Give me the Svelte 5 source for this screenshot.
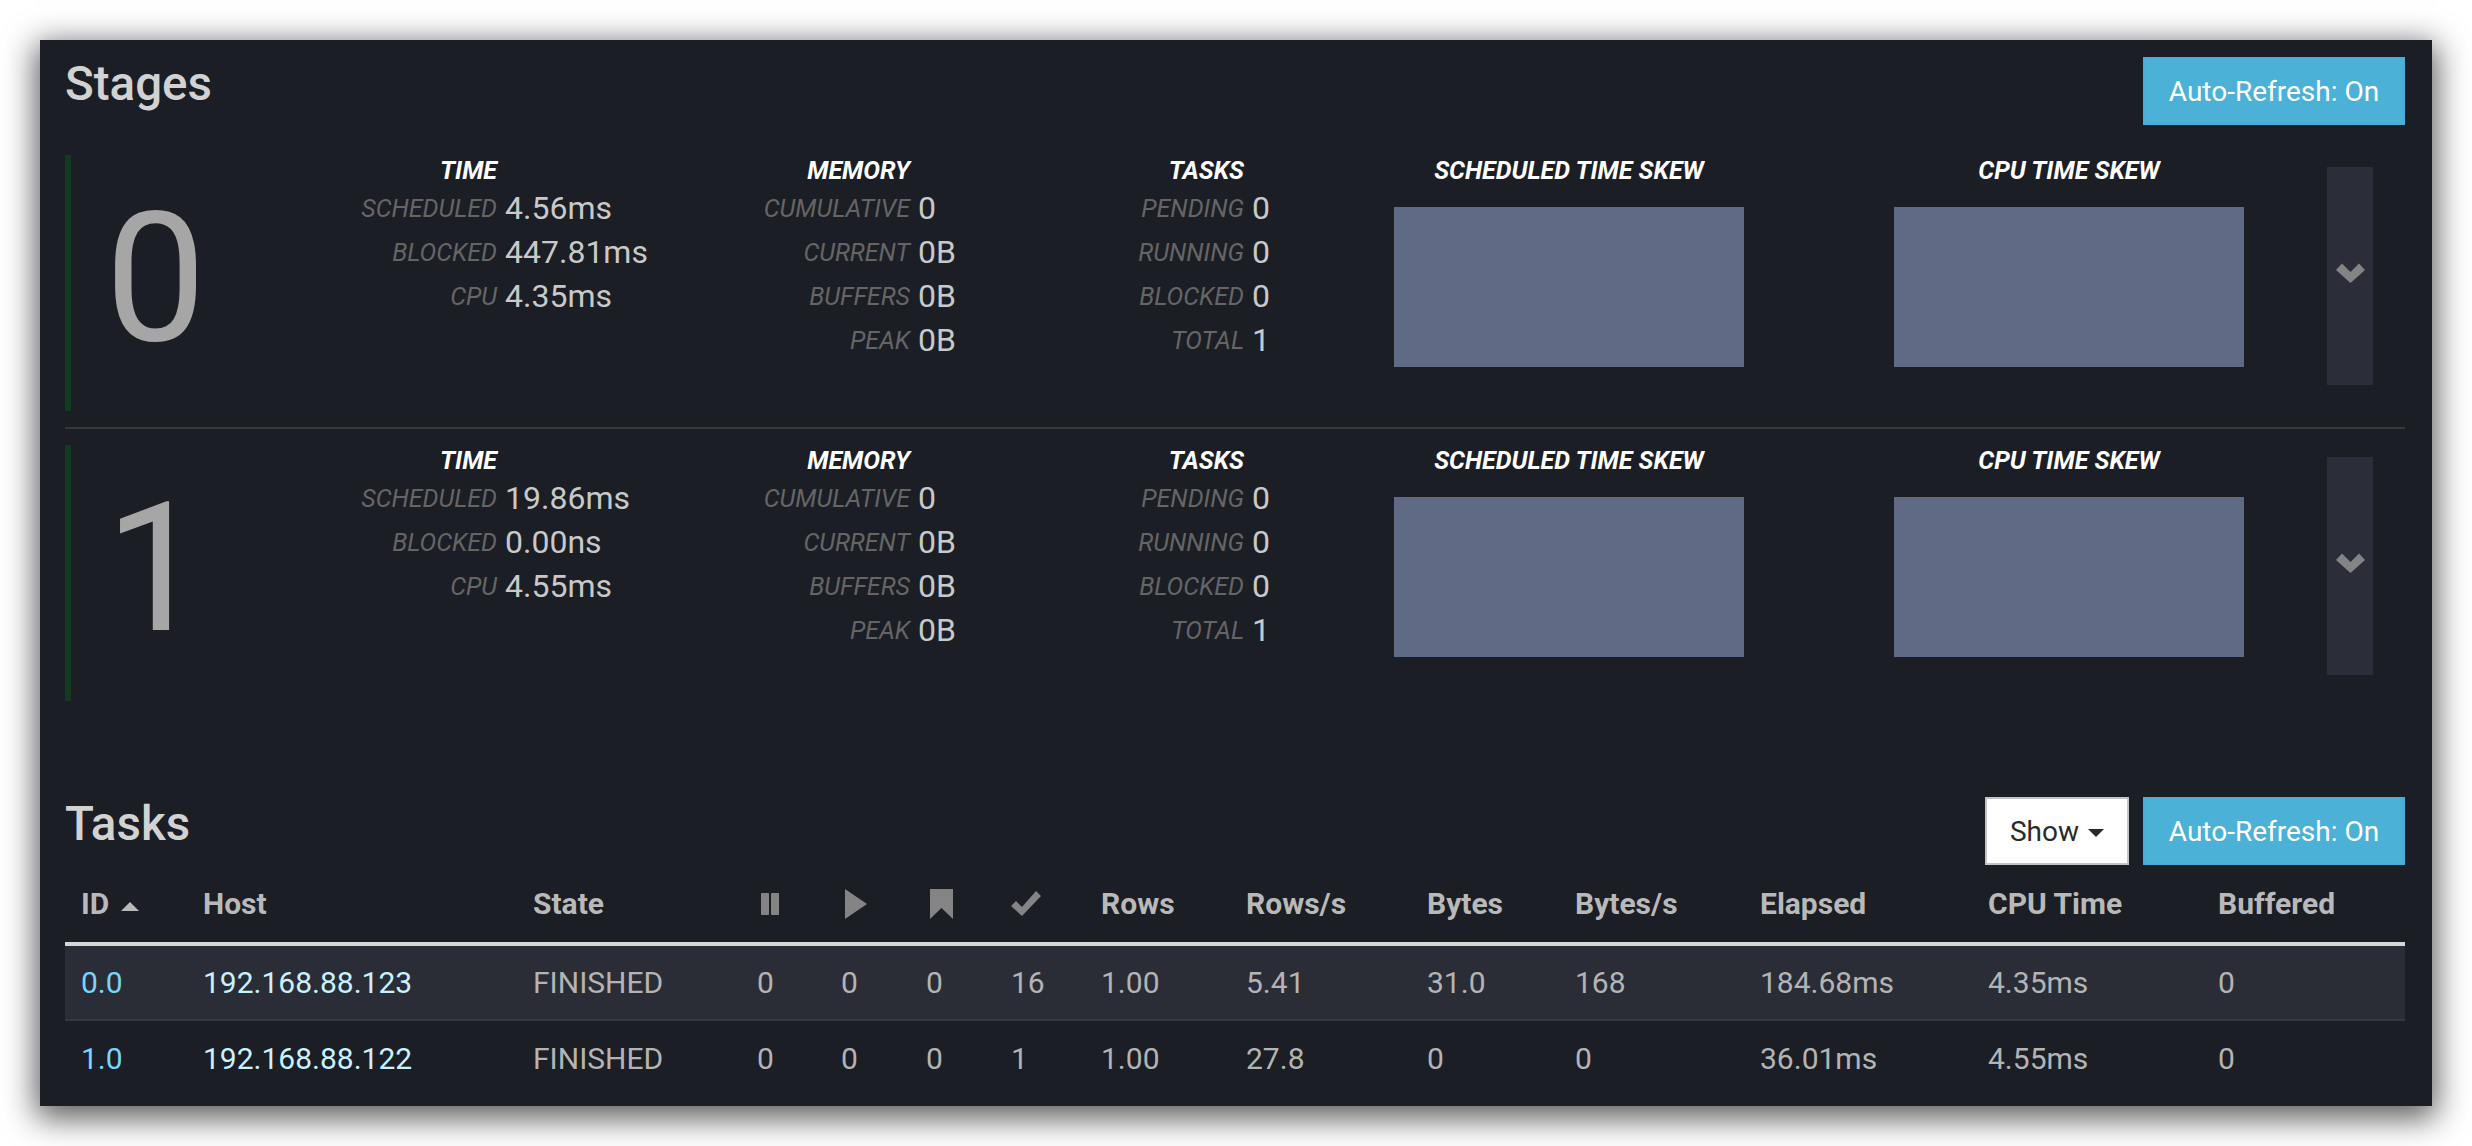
<script>
    const stages = [
        {
            id: 0,
            time: [["Scheduled", "4.56ms"], ["Blocked", "447.81ms"], ["CPU", "4.35ms"]],
            memory: [["Cumulative", "0"], ["Current", "0B"], ["Buffers", "0B"], ["Peak", "0B"]],
            tasks: [["Pending", "0"], ["Running", "0"], ["Blocked", "0"], ["Total", "1"]]
        },
        {
            id: 1,
            time: [["Scheduled", "19.86ms"], ["Blocked", "0.00ns"], ["CPU", "4.55ms"]],
            memory: [["Cumulative", "0"], ["Current", "0B"], ["Buffers", "0B"], ["Peak", "0B"]],
            tasks: [["Pending", "0"], ["Running", "0"], ["Blocked", "0"], ["Total", "1"]]
        }
    ];
    const tasks = [
        { id: "0.0", host: "192.168.88.123", state: "FINISHED", q: "0", r: "0", b: "0", s: "16", rows: "1.00", rowsSec: "5.41", bytes: "31.0", bytesSec: "168", elapsed: "184.68ms", cpu: "4.35ms", buffered: "0" },
        { id: "1.0", host: "192.168.88.122", state: "FINISHED", q: "0", r: "0", b: "0", s: "1", rows: "1.00", rowsSec: "27.8", bytes: "0", bytesSec: "0", elapsed: "36.01ms", cpu: "4.55ms", buffered: "0" }
    ];
    const widths = [122, 330, 224, 84, 85, 85, 90, 145, 181, 148, 185, 228, 230, 203];
</script>

{#snippet metric(cls, title, rows)}
    <div class="metric {cls}">
        <div class="metric-title">{title}</div>
        <div></div>
        {#each rows as row}
            <div class="metric-label">{row[0]}</div>
            <div class="metric-value">{row[1]}</div>
        {/each}
    </div>
{/snippet}

<div class="page">
    <div class="panel">
        <div class="section-head first">
            <h3>Stages</h3>
            <button class="btn btn-info">Auto-Refresh: On</button>
        </div>

        {#each stages as stage, i}
            {#if i > 0}
                <hr class="divider" />
            {/if}
            <div class="stage">
                <div class="stage-id">{stage.id}</div>
                {@render metric("m-time", "Time", stage.time)}
                {@render metric("m-memory", "Memory", stage.memory)}
                {@render metric("m-tasks", "Tasks", stage.tasks)}
                <div class="skew">
                    <div class="metric-title">Scheduled Time Skew</div>
                    <div class="chart"></div>
                </div>
                <div class="skew second">
                    <div class="metric-title">CPU Time Skew</div>
                    <div class="chart"></div>
                </div>
                <div class="expand">
                    <svg width="29" height="20" viewBox="0 0 29 20">
                        <path d="M0 7 L6 0.5 L14.5 9 L23 0.5 L29 7 L14.5 20 Z" fill="#848484" />
                    </svg>
                </div>
            </div>
        {/each}

        <div class="section-head second-head">
            <h3>Tasks</h3>
            <div class="actions">
                <button class="btn btn-default">Show <span class="caret"></span></button>
                <button class="btn btn-info">Auto-Refresh: On</button>
            </div>
        </div>

        <table>
            <colgroup>
                {#each widths as w}
                    <col style="width: {w}px" />
                {/each}
            </colgroup>
            <thead>
                <tr>
                    <th>ID <span class="sort"></span></th>
                    <th>Host</th>
                    <th>State</th>
                    <th>
                        <svg class="ico" width="18" height="22" viewBox="0 0 18 22" style="margin-left: 4px">
                            <rect x="0" y="0" width="8" height="22" rx="1" fill="#848484" />
                            <rect x="10" y="0" width="8" height="22" rx="1" fill="#848484" />
                        </svg>
                    </th>
                    <th>
                        <svg class="ico" width="22" height="30" viewBox="0 0 22 30" style="margin-left: 4px">
                            <path d="M0 0 L22 15 L0 30 Z" fill="#848484" />
                        </svg>
                    </th>
                    <th>
                        <svg class="ico" width="23" height="30" viewBox="0 0 23 30" style="margin-left: 4px">
                            <path d="M0 0 H23 V30 L11.5 19 L0 30 Z" fill="#848484" />
                        </svg>
                    </th>
                    <th>
                        <svg class="ico" width="30" height="25" viewBox="0 0 30 25">
                            <path d="M0 15 L5 10 L11 16 L25 0 L30 5 L11 25 Z" fill="#848484" />
                        </svg>
                    </th>
                    <th>Rows</th>
                    <th>Rows/s</th>
                    <th>Bytes</th>
                    <th>Bytes/s</th>
                    <th>Elapsed</th>
                    <th>CPU Time</th>
                    <th>Buffered</th>
                </tr>
            </thead>
            <tbody>
                {#each tasks as t, i}
                    <tr class:odd={i === 0}>
                        <td class="task-id">{t.id}</td>
                        <td class="task-host">{t.host}</td>
                        <td>{t.state}</td>
                        <td>{t.q}</td>
                        <td>{t.r}</td>
                        <td>{t.b}</td>
                        <td>{t.s}</td>
                        <td>{t.rows}</td>
                        <td>{t.rowsSec}</td>
                        <td>{t.bytes}</td>
                        <td>{t.bytesSec}</td>
                        <td>{t.elapsed}</td>
                        <td>{t.cpu}</td>
                        <td>{t.buffered}</td>
                    </tr>
                {/each}
            </tbody>
        </table>
    </div>
</div>

<style>
    :global(body) {
        margin: 0;
        background: #fff;
    }
    .page {
        padding: 40px;
        height: 1146px;
        box-sizing: border-box;
        overflow: hidden;
        font-family: Roboto, "Liberation Sans", sans-serif;
    }
    .panel {
        background: #1b1e25;
        height: 1066px;
        box-sizing: border-box;
        padding: 17px 27px 0 25px;
        box-shadow: 0 8px 30px 4px rgba(0, 0, 0, 0.65);
    }
    .section-head {
        display: flex;
        justify-content: space-between;
        align-items: flex-start;
        height: 68px;
    }
    h3 {
        margin: 0;
        color: #d2d2d2;
        font-size: 47.5px;
        font-weight: 500;
        line-height: 68px;
        margin-top: -7px;
    }
    .first {
        margin-bottom: 30px;
    }
    .second-head {
        margin-top: 96px;
    }
    .actions {
        display: flex;
        gap: 14px;
    }
    .btn {
        height: 68px;
        font-family: inherit;
        font-size: 28px;
        border-radius: 0;
        box-sizing: border-box;
        margin: 0;
        cursor: pointer;
    }
    .btn-info {
        width: 262px;
        background: #4cb1d6;
        border: 2px solid #46aed8;
        color: #fff;
        padding: 0;
    }
    .btn-default {
        width: 144px;
        background: #fff;
        border: 2px solid #c4c4c4;
        color: #2a2a2a;
        padding: 0;
    }
    .caret {
        display: inline-block;
        vertical-align: middle;
        margin-left: 2px;
        border-top: 8px solid #2a2a2a;
        border-left: 8px solid transparent;
        border-right: 8px solid transparent;
    }
    .divider {
        border: 0;
        border-top: 2px solid #37383c;
        margin: 16px 0;
    }
    .stage {
        display: flex;
        height: 256px;
        border-left: 6px solid #123a20;
    }
    .stage-id {
        width: 169px;
        flex: none;
        text-align: center;
        color: #a6a6a6;
        font-size: 180px;
        font-weight: 400;
        line-height: 248px;
    }
    .metric {
        display: grid;
        grid-template-columns: 1fr 142px;
        column-gap: 8px;
        grid-auto-rows: 44px;
        grid-template-rows: 31px;
        align-content: start;
        align-items: center;
        flex: none;
    }
    .m-time {
        width: 407px;
    }
    .m-memory {
        width: 413px;
    }
    .m-tasks {
        width: 334px;
    }
    .metric-title {
        color: #fff;
        font-size: 25px;
        font-style: italic;
        font-weight: 700;
        text-transform: uppercase;
        text-align: right;
        line-height: 31px;
        white-space: nowrap;
    }
    .metric-label {
        color: #656565;
        font-size: 25px;
        font-style: italic;
        text-transform: uppercase;
        text-align: right;
        white-space: nowrap;
    }
    .metric-value {
        color: #c9c9c9;
        font-size: 32px;
        white-space: nowrap;
    }
    .skew {
        width: 350px;
        flex: none;
    }
    .skew.second {
        margin-left: 150px;
    }
    .skew .metric-title {
        text-align: center;
    }
    .chart {
        margin-top: 21px;
        height: 160px;
        background: #606a84;
    }
    .expand {
        width: 46px;
        height: 218px;
        margin: 12px 0 0 83px;
        flex: none;
        background: #2b2e39;
        display: flex;
        align-items: center;
        justify-content: center;
    }
    .expand svg {
        margin-bottom: 6px;
    }
    table {
        width: 2340px;
        table-layout: fixed;
        border-collapse: collapse;
        margin-top: 0;
    }
    th {
        height: 79px;
        padding: 0 16px;
        box-sizing: border-box;
        border-bottom: 4px solid #d6d6d6;
        color: #b9b9b9;
        font-size: 30px;
        font-weight: 700;
        text-align: left;
        white-space: nowrap;
    }
    .ico {
        display: block;
    }
    .sort {
        display: inline-block;
        vertical-align: middle;
        margin-left: 4px;
        border-bottom: 9px solid #b9b9b9;
        border-left: 9px solid transparent;
        border-right: 9px solid transparent;
    }
    td {
        height: 76px;
        padding: 0 16px;
        box-sizing: border-box;
        color: #b4b4b4;
        font-size: 30px;
        font-weight: 400;
        white-space: nowrap;
    }
    tr.odd td {
        background: #2a2d36;
        border-bottom: 2px solid #37383c;
    }
    td.task-id {
        color: #76d6fb;
    }
    td.task-host {
        color: #c9f1ff;
    }
</style>
